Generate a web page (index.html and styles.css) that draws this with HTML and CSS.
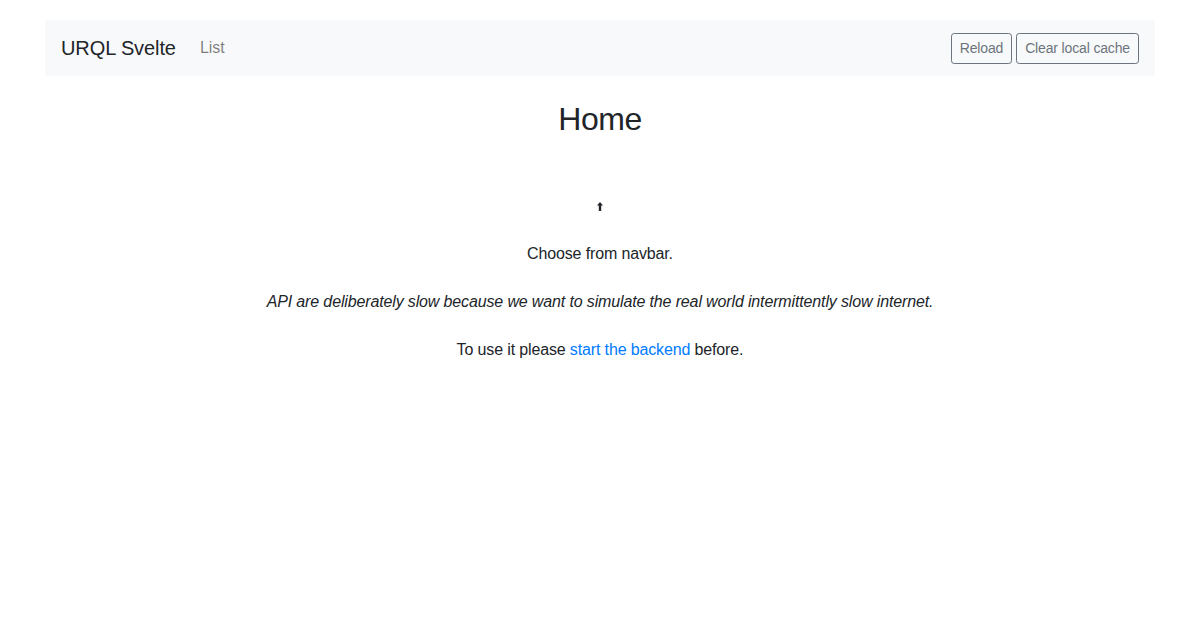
FILE: index.html
```html
<!DOCTYPE html>
<html lang="en">
<head>
<meta charset="utf-8">
<title>URQL Svelte</title>
<link rel="stylesheet" href="styles.css">
</head>
<body>
<div class="container">
  <nav class="navbar">
    <div class="nav-left">
      <a class="brand" href="#">URQL Svelte</a>
      <a class="nav-link" href="#">List</a>
    </div>
    <div class="nav-right">
      <button class="btn">Reload</button>
      <button class="btn">Clear local cache</button>
    </div>
  </nav>
  <main class="home">
    <h2 class="title">Home</h2>
    <div class="content">
      <p class="arrow-line"><svg class="arrow" width="6" height="9" viewBox="0 0 6 9"><path d="M3 0 L6 3.5 L4.2 3.5 L4.2 9 L1.8 9 L1.8 3.5 L0 3.5 Z" fill="#212529"/></svg></p>
      <p>Choose from navbar.</p>
      <p><em>API are deliberately slow because we want to simulate the real world intermittently slow internet.</em></p>
      <p>To use it please <a class="link" href="#">start the backend</a> before.</p>
    </div>
  </main>
</div>
</body>
</html>
```
FILE: styles.css
```css
* { box-sizing: border-box; }
html, body {
  margin: 0;
  padding: 0;
  background: #fff;
}
body {
  font-family: "Liberation Sans", Arial, sans-serif;
  font-size: 16px;
  line-height: 1.5;
  color: #212529;
}
.container {
  width: 1110px;
  margin: 20px auto 0;
}
.navbar {
  background: #f8f9fa;
  height: 56px;
  padding: 0 16px;
  display: flex;
  align-items: center;
  justify-content: space-between;
}
.nav-left {
  display: flex;
  align-items: center;
}
.brand {
  font-size: 20px;
  line-height: 30px;
  color: #212529;
  text-decoration: none;
  margin-right: 16px;
  letter-spacing: -0.1px;
}
.nav-link {
  padding: 8px;
  color: rgba(0, 0, 0, 0.5);
  text-decoration: none;
  font-size: 16px;
}
.nav-right {
  display: flex;
  gap: 4px;
}
.btn {
  font-family: "Liberation Sans", Arial, sans-serif;
  font-size: 14px;
  line-height: 21px;
  padding: 4px 8px;
  border: 1px solid #6c757d;
  border-radius: 3.2px;
  background: transparent;
  color: #6c757d;
  cursor: pointer;
  letter-spacing: -0.15px;
}
.home {
  display: flex;
  flex-direction: column;
  align-items: center;
  text-align: center;
}
.title {
  font-size: 32px;
  font-weight: 500;
  line-height: 38px;
  margin: 24px 0 0;
  letter-spacing: -0.5px;
}
.content {
  padding-top: 56px;
  display: flex;
  flex-direction: column;
  gap: 24px;
}
.content p {
  margin: 0;
  line-height: 24px;
  letter-spacing: -0.14px;
}
.arrow-line {
  height: 24px;
  display: flex;
  justify-content: center;
  align-items: center;
}
.arrow { display: block; }
.link {
  color: #007bff;
  text-decoration: none;
}
```
